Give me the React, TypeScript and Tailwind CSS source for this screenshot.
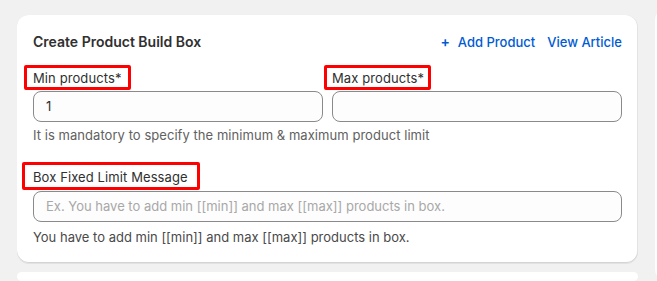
import React from "react";

function Annot({ children, className }: { children: React.ReactNode; className: string }) {
  return (
    <span className="relative inline-block">
      {children}
      <span className={`pointer-events-none absolute border-[3px] border-[#ff0000] rounded-[2px] ${className}`} />
    </span>
  );
}

export default function App() {
  return (
    <div
      className="w-[657px] h-[281px] overflow-hidden bg-[#f1f1f1] flex gap-[17px] pl-[17px] pt-[15px] text-[#303030]"
      style={{ fontFamily: "Inter, 'Noto Sans', sans-serif" }}
    >
      <div className="w-[621px] shrink-0 flex flex-col gap-[9px]">
        <div className="bg-white rounded-[12px] px-4 pt-[17px] pb-4 shadow-[0_1px_0_0_rgba(26,26,26,0.07),inset_0_-1px_0_0_#d4d4d4,inset_-1px_0_0_0_#e3e3e3]">
          <div className="flex items-center justify-between h-5">
            <h2 className="text-[14px] leading-5 font-semibold">Create Product Build Box</h2>
            <div className="flex items-center gap-[12px] text-[13px] leading-5 font-medium text-[#005bd3]">
              <span className="flex items-center gap-[8px]">
                <span className="text-[14px] font-semibold">+</span>
                <span>Add Product</span>
              </span>
              <span>View Article</span>
            </div>
          </div>

          <div className="grid grid-cols-2 gap-[9px] mt-4">
            <div className="flex flex-col">
              <div className="h-5 text-[13px] leading-5 tracking-[0.1px]">
                <Annot className="-left-[9px] -right-[9px] -top-[3px] -bottom-[2px]">Min products*</Annot>
              </div>
              <div className="mt-[3px] h-[31px] rounded-[8px] border border-[#8a8a8a] bg-[#fdfdfd] flex items-center px-3 text-[13px]">
                1
              </div>
            </div>
            <div className="flex flex-col">
              <div className="h-5 text-[13px] leading-5 tracking-[0.1px]">
                <Annot className="-left-[8px] -right-[7px] -top-[3px] -bottom-[2px]">Max products*</Annot>
              </div>
              <div className="mt-[3px] h-[31px] rounded-[8px] border border-[#8a8a8a] bg-[#fdfdfd]" />
            </div>
          </div>
          <p className="mt-[3px] text-[13px] leading-5 text-[#616161] tracking-[0.05px]">
            It is mandatory to specify the minimum &amp; maximum product limit
          </p>

          <div className="mt-[22px] h-5 text-[13px] leading-5 tracking-[0.1px]">
            <Annot className="-left-[11px] -right-[12px] -top-[5px] -bottom-[3px]">Box Fixed Limit Message</Annot>
          </div>
          <div className="mt-[4px] h-[31px] rounded-[8px] border border-[#8a8a8a] bg-[#fdfdfd] flex items-center px-3 text-[13px] text-[#a8a8a8]">
            Ex. You have to add min [[min]] and max [[max]] products in box.
          </div>
          <p className="mt-[5px] text-[13px] leading-5 text-[#4a4a4a]">
            You have to add min [[min]] and max [[max]] products in box.
          </p>
        </div>
        <div className="bg-white rounded-[12px] h-[40px]" />
      </div>
      <div className="mt-[-7px] w-[200px] shrink-0 bg-white rounded-[12px]" />
    </div>
  );
}
